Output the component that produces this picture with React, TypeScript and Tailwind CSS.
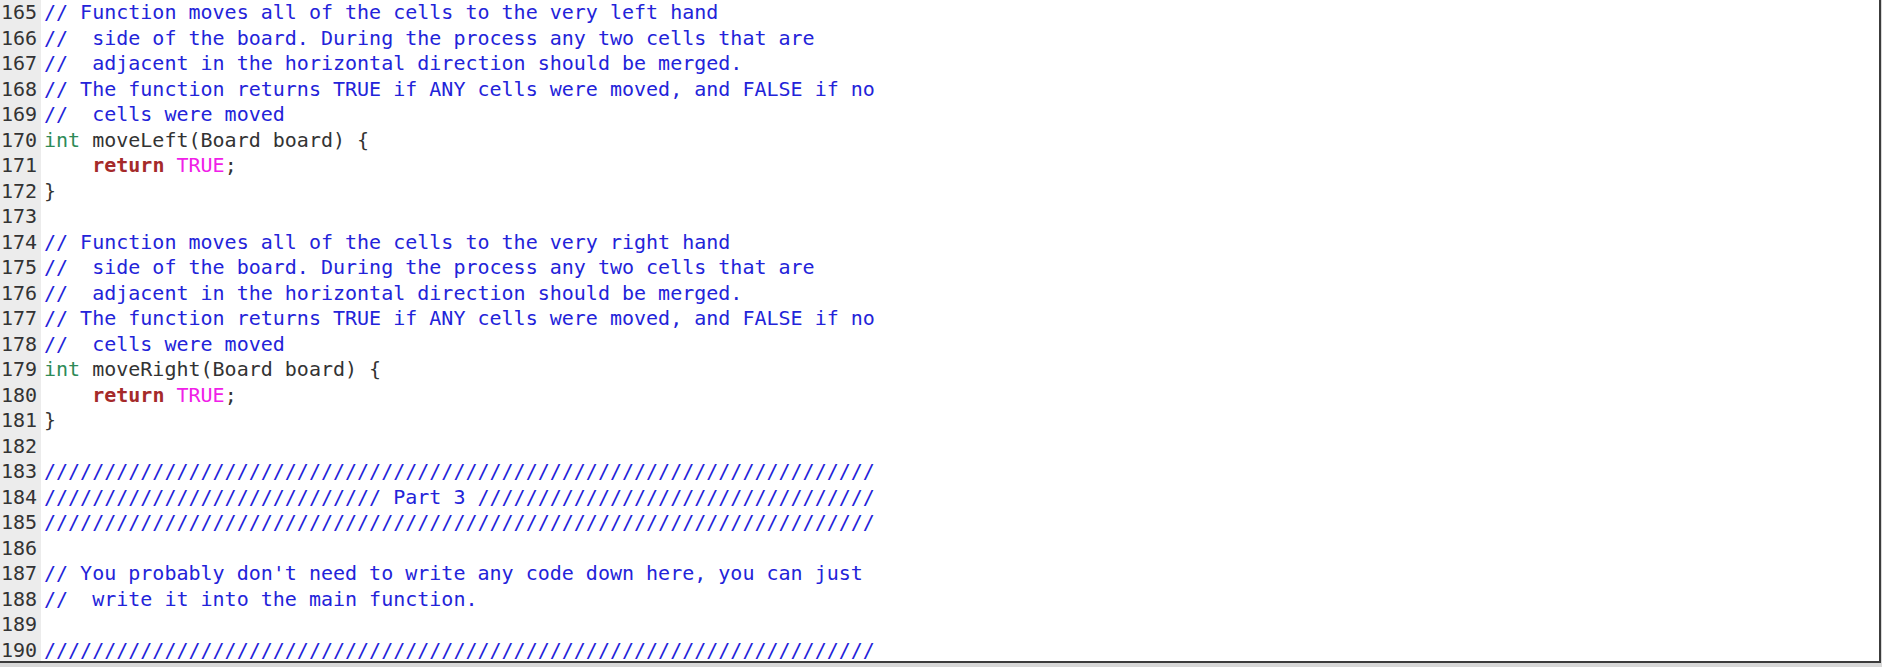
const C = "text-[#2323d9]"

type Seg = { t: string; c?: string }

const slashes = (n: number) => "/".repeat(n)

const lines: Seg[][] = [
  [{ t: "// Function moves all of the cells to the very left hand", c: C }],
  [{ t: "//  side of the board. During the process any two cells that are", c: C }],
  [{ t: "//  adjacent in the horizontal direction should be merged.", c: C }],
  [{ t: "// The function returns TRUE if ANY cells were moved, and FALSE if no", c: C }],
  [{ t: "//  cells were moved", c: C }],
  [{ t: "int", c: "text-[#2e8b57]" }, { t: " moveLeft(Board board) {" }],
  [{ t: "    " }, { t: "return", c: "text-[#a52a2a] font-bold" }, { t: " " }, { t: "TRUE", c: "text-[#f020e8]" }, { t: ";" }],
  [{ t: "}" }],
  [],
  [{ t: "// Function moves all of the cells to the very right hand", c: C }],
  [{ t: "//  side of the board. During the process any two cells that are", c: C }],
  [{ t: "//  adjacent in the horizontal direction should be merged.", c: C }],
  [{ t: "// The function returns TRUE if ANY cells were moved, and FALSE if no", c: C }],
  [{ t: "//  cells were moved", c: C }],
  [{ t: "int", c: "text-[#2e8b57]" }, { t: " moveRight(Board board) {" }],
  [{ t: "    " }, { t: "return", c: "text-[#a52a2a] font-bold" }, { t: " " }, { t: "TRUE", c: "text-[#f020e8]" }, { t: ";" }],
  [{ t: "}" }],
  [],
  [{ t: slashes(69), c: C }],
  [{ t: slashes(28) + " Part 3 " + slashes(33), c: C }],
  [{ t: slashes(69), c: C }],
  [],
  [{ t: "// You probably don't need to write any code down here, you can just", c: C }],
  [{ t: "//  write it into the main function.", c: C }],
  [],
  [{ t: slashes(69), c: C }],
]

export default function App() {
  return (
    <div className="h-[667px] w-full overflow-hidden bg-[#d8d8d8]">
      <div
        className="h-[663px] w-[1881px] overflow-hidden border-r-2 border-b-2 border-[#3c3c3c] bg-white text-[20px] leading-[25.52px] text-[#333]"
        style={{ fontFamily: '"DejaVu Sans Mono", monospace' }}
      >
        {lines.map((segs, i) => (
          <div key={i} className="flex h-[25.52px]">
            <div className="w-[41px] shrink-0 bg-[#ececec] pr-[4px] text-right text-[#333]">{165 + i}</div>
            <div className="whitespace-pre pl-[3px]">
              {segs.map((s, j) => (
                <span key={j} className={s.c}>
                  {s.t}
                </span>
              ))}
            </div>
          </div>
        ))}
      </div>
    </div>
  )
}
